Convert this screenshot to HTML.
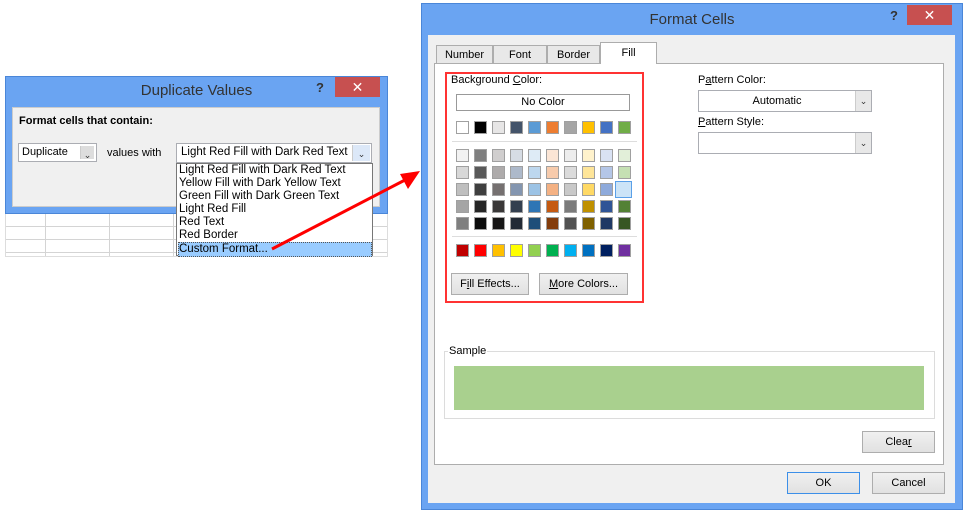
<!DOCTYPE html>
<html><head><meta charset="utf-8"><style>
*{box-sizing:border-box;margin:0;padding:0}
body{width:967px;height:517px;position:relative;background:#fff;font-family:"Liberation Sans",sans-serif;font-size:11px;color:#000;overflow:hidden}
.a{position:absolute}
.btn{position:absolute;background:linear-gradient(#f0f0f0,#e1e1e1);border:1px solid #adadad;text-align:center;font-size:11px}
.sw{position:absolute;width:13px;height:13px;border:1px solid #a0a0a0}
.cb{position:absolute;background:#fff;border:1px solid #abadb3}
.arr{position:absolute;right:0;top:0;bottom:0;width:16px;background:#e8e8e8;border-left:1px solid #ccc;text-align:center;font-size:9px;color:#333;line-height:18px}
</style></head><body>
<div class="a" style="left:5px;top:205px;width:383px;height:52px;background:#fff;border:1px solid #ddd;border-top:none;
background-image:linear-gradient(#d4d4d4 1px,transparent 1px),linear-gradient(90deg,#d4d4d4 1px,transparent 1px);background-size:64px 13px;background-position:39px 8px"></div>
<div class="a" style="left:5px;top:76px;width:383px;height:138px;background:#6aa4f2;border:1px solid #4a86d8"></div>
<div class="a" style="left:5px;top:82px;width:383px;text-align:center;font-size:15px;color:#333">Duplicate Values</div>
<div class="a" style="left:316px;top:80px;font-size:13px;font-weight:bold;color:#333">?</div>
<div class="a" style="left:335px;top:77px;width:45px;height:20px;background:#c75050;color:#fff;text-align:center;font-size:14px;line-height:20px">✕</div>
<div class="a" style="left:12px;top:107px;width:368px;height:100px;background:#f0f0f0;border:1px solid #ccc"></div>
<div class="a" style="left:19px;top:115px;font-weight:bold">Format cells that contain:</div>
<div class="cb" style="left:18px;top:143px;width:79px;height:19px;padding:2px 3px">Duplicate<div class="arr" style="width:14px;background:#ddd;margin:2px;">⌄</div></div>
<div class="a" style="left:107px;top:147px">values with</div>
<div class="cb" style="left:176px;top:143px;width:196px;height:20px;padding:2px 4px;font-size:11.5px">Light Red Fill with Dark Red Text<div class="arr" style="background:#dce8f8;width:18px;margin:1px;">⌄</div></div>
<div class="a" style="left:176px;top:163px;width:197px;height:93px;background:#fff;border:1px solid #777;line-height:13px;padding-left:2px;font-size:11.5px">
Light Red Fill with Dark Red Text<br>Yellow Fill with Dark Yellow Text<br>Green Fill with Dark Green Text<br>Light Red Fill<br>Red Text<br>Red Border<br><div style="background:#99ccff;border:1px dotted #555;margin-left:-1px;width:194px">Custom Format...</div></div>
<svg class="a" style="left:0;top:0" width="967" height="517"><line x1="272" y1="249" x2="405" y2="180" stroke="#f00" stroke-width="3"/><polygon points="420,171 400,174 408,189" fill="#f00"/></svg>
<div class="a" style="left:421px;top:3px;width:542px;height:507px;background:#6aa4f2;border:1px solid #4a86d8"></div>
<div class="a" style="left:421px;top:11px;width:542px;text-align:center;font-size:15px;color:#333">Format Cells</div>
<div class="a" style="left:890px;top:8px;font-size:13px;font-weight:bold;color:#333">?</div>
<div class="a" style="left:907px;top:5px;width:45px;height:20px;background:#c75050;color:#fff;text-align:center;font-size:14px;line-height:20px">✕</div>
<div class="a" style="left:428px;top:35px;width:527px;height:468px;background:#f0f0f0"></div>
<div class="a" style="left:434px;top:63px;width:510px;height:402px;background:#fff;border:1px solid #adadad"></div>
<div class="a" style="left:436px;top:45px;width:57px;height:19px;background:#e8e8e8;border:1px solid #adadad;text-align:center;line-height:18px">Number</div>
<div class="a" style="left:493px;top:45px;width:54px;height:19px;background:#e8e8e8;border:1px solid #adadad;text-align:center;line-height:18px">Font</div>
<div class="a" style="left:547px;top:45px;width:53px;height:19px;background:#e8e8e8;border:1px solid #adadad;text-align:center;line-height:18px">Border</div>
<div class="a" style="left:600px;top:42px;width:57px;height:22px;background:#fff;border:1px solid #adadad;border-bottom:none;text-align:center;line-height:20px">Fill</div>
<div class="a" style="left:445px;top:72px;width:199px;height:231px;border:2px solid #f33"></div>
<div class="a" style="left:451px;top:74px">Background <u>C</u>olor:</div>
<div class="a" style="left:456px;top:94px;width:174px;height:17px;border:1px solid #999;text-align:center;line-height:15px">No Color</div>
<div class="a" style="left:452px;top:141px;width:185px;height:1px;background:#ddd"></div>
<div class="a" style="left:452px;top:236px;width:185px;height:1px;background:#ddd"></div>
<div id="sw"></div>
<div class="a" style="left:615px;top:181px;width:17px;height:17px;border:1px solid #5aa0e8;background:#cce4f7"></div>
<script>
var rows=[[121,"#fff #000 #e7e6e6 #44546a #5b9bd5 #ed7d31 #a5a5a5 #ffc000 #4472c4 #70ad47"],
[149,"#f2f2f2 #7f7f7f #d0cece #d6dce4 #deebf6 #fbe5d5 #ededed #fff2cc #d9e2f3 #e2efd9"],
[166,"#d8d8d8 #595959 #aeabab #adb9ca #bdd7ee #f7cbac #dbdbdb #fee599 #b4c6e7 #c5e0b3"],
[183,"#bfbfbf #3f3f3f #757070 #8496b0 #9cc3e5 #f4b183 #c9c9c9 #ffd965 #8eaadb #a8d08d"],
[200,"#a5a5a5 #262626 #3a3838 #333f4f #2e75b5 #c55a11 #7b7b7b #bf9000 #2f5496 #538135"],
[217,"#7f7f7f #0c0c0c #171616 #222a35 #1e4e79 #833c0b #525252 #7f6000 #1f3864 #375623"],
[244,"#c00000 #f00 #ffc000 #ff0 #92d050 #00b050 #00b0f0 #0070c0 #002060 #7030a0"]];
var h="";rows.forEach(function(r){r[1].split(" ").forEach(function(c,i){h+='<div class="sw" style="left:'+(456+i*18)+'px;top:'+r[0]+'px;background:'+c+'"></div>';});});
document.getElementById("sw").outerHTML=h;
</script>
<div class="btn" style="left:451px;top:273px;width:78px;height:22px;line-height:20px">F<u>i</u>ll Effects...</div>
<div class="btn" style="left:539px;top:273px;width:89px;height:22px;line-height:20px"><u>M</u>ore Colors...</div>
<div class="a" style="left:698px;top:74px">P<u>a</u>ttern Color:</div>
<div class="cb" style="left:698px;top:90px;width:174px;height:22px;text-align:center;line-height:20px;padding-right:16px">Automatic<div class="arr" style="line-height:20px">⌄</div></div>
<div class="a" style="left:698px;top:116px"><u>P</u>attern Style:</div>
<div class="cb" style="left:698px;top:132px;width:174px;height:22px"><div class="arr" style="line-height:20px">⌄</div></div>
<div class="a" style="left:444px;top:351px;width:491px;height:68px;border:1px solid #dcdcdc"></div>
<div class="a" style="left:448px;top:345px;background:#fff;padding:0 1px">Sample</div>
<div class="a" style="left:454px;top:366px;width:470px;height:44px;background:#a9d08e"></div>
<div class="btn" style="left:862px;top:431px;width:73px;height:22px;line-height:20px">Clea<u>r</u></div>
<div class="btn" style="left:787px;top:472px;width:73px;height:22px;line-height:20px;border-color:#3c8fe8">OK</div>
<div class="btn" style="left:872px;top:472px;width:73px;height:22px;line-height:20px">Cancel</div>
</body></html>
